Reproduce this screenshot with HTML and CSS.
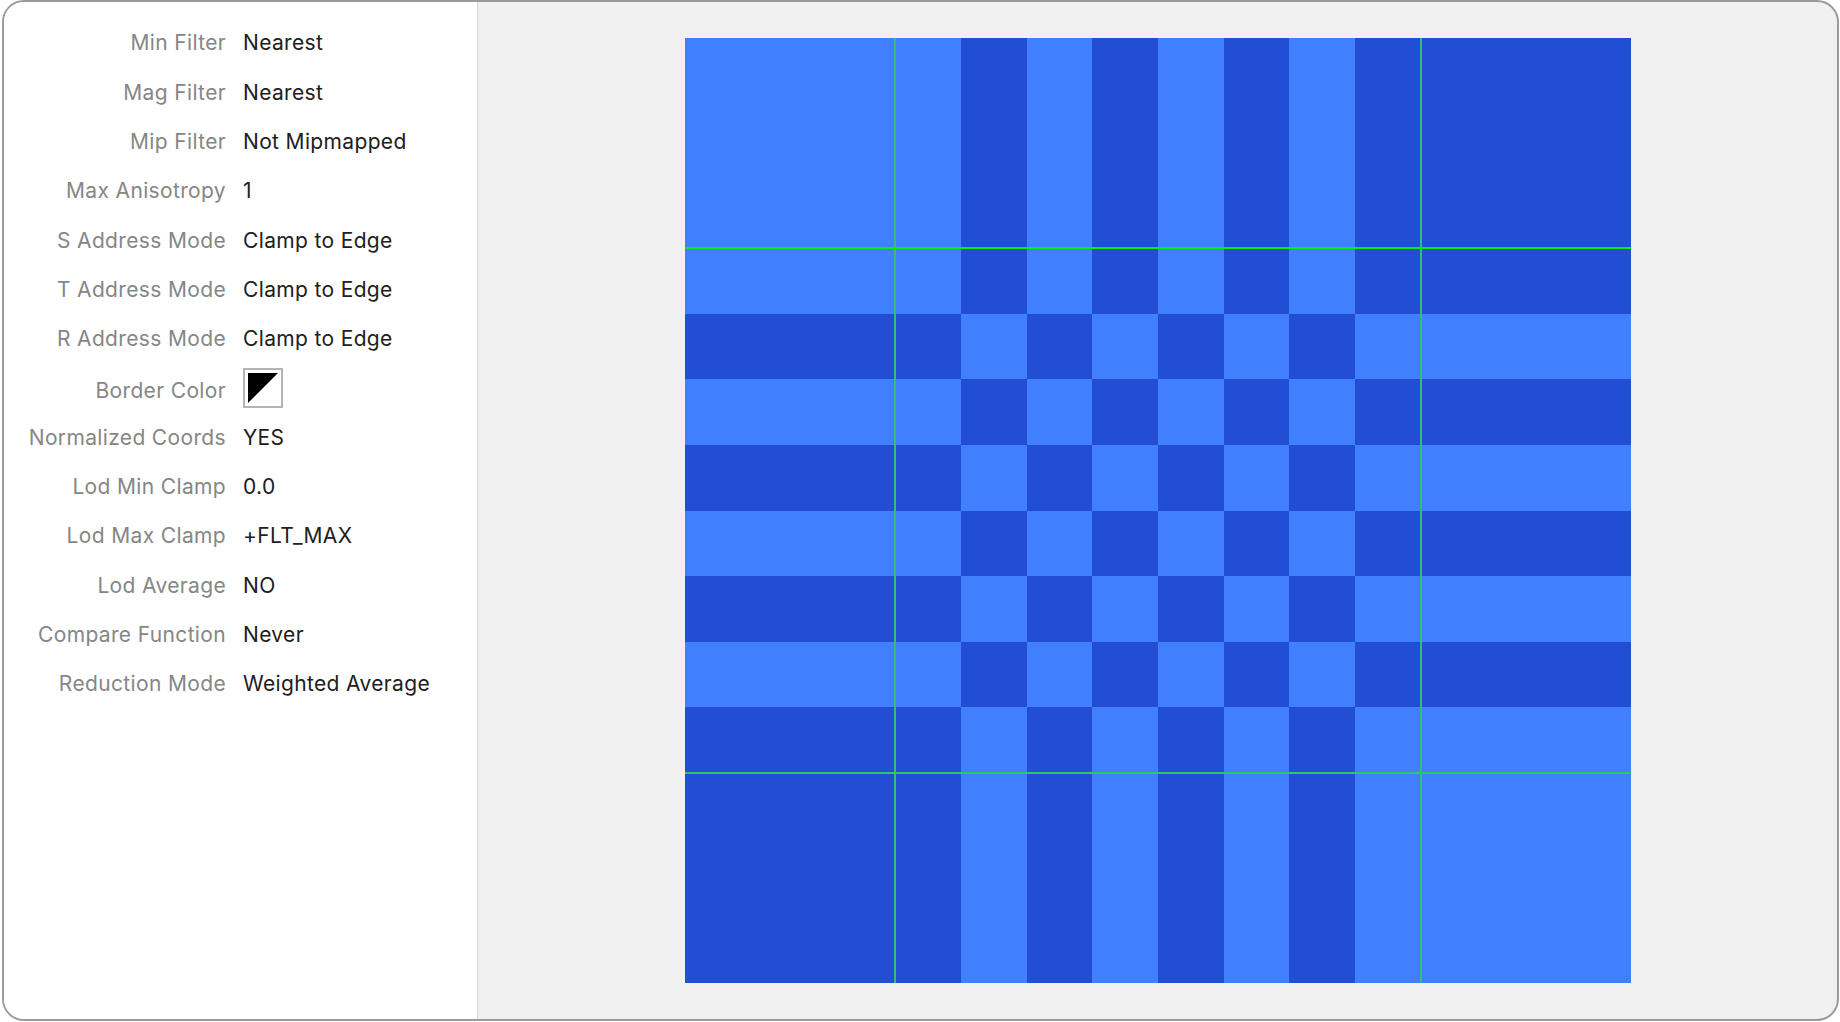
FILE: index.html
```html
<!DOCTYPE html>
<html>
<head>
<meta charset="utf-8">
<link rel="stylesheet" href="styles.css">
</head>
<body>
<div class="window">
  <div class="props">
    <div class="label">Min Filter</div><div class="value">Nearest</div>
    <div class="label">Mag Filter</div><div class="value">Nearest</div>
    <div class="label">Mip Filter</div><div class="value">Not Mipmapped</div>
    <div class="label">Max Anisotropy</div><div class="value">1</div>
    <div class="label">S Address Mode</div><div class="value">Clamp to Edge</div>
    <div class="label">T Address Mode</div><div class="value">Clamp to Edge</div>
    <div class="label">R Address Mode</div><div class="value">Clamp to Edge</div>
    <div class="label label-low">Border Color</div>
    <div class="value"><div class="swatch"><svg class="swatch-tri" viewBox="0 0 30 30"><polygon points="0,0 30,0 0,30" fill="#000"/></svg></div></div>
    <div class="label">Normalized Coords</div><div class="value">YES</div>
    <div class="label">Lod Min Clamp</div><div class="value">0.0</div>
    <div class="label">Lod Max Clamp</div><div class="value">+FLT_MAX</div>
    <div class="label">Lod Average</div><div class="value">NO</div>
    <div class="label">Compare Function</div><div class="value">Never</div>
    <div class="label">Reduction Mode</div><div class="value">Weighted Average</div>
  </div>
  <div class="preview">
    <svg class="texture" width="946" height="945" viewBox="-3.2 -3.2 14.4 14.4" preserveAspectRatio="none" shape-rendering="crispEdges">
      <rect x="-3.2" y="-3.2" width="14.4" height="14.4" fill="#4080ff"/>
      <g fill="#214ed5">
        <rect x="1" y="-3.2" width="1" height="4.2"/><rect x="3" y="-3.2" width="1" height="4.2"/><rect x="5" y="-3.2" width="1" height="4.2"/><rect x="7" y="-3.2" width="4.2" height="4.2"/>
        <rect x="-3.2" y="1" width="4.2" height="1"/><rect x="2" y="1" width="1" height="1"/><rect x="4" y="1" width="1" height="1"/><rect x="6" y="1" width="1" height="1"/>
        <rect x="1" y="2" width="1" height="1"/><rect x="3" y="2" width="1" height="1"/><rect x="5" y="2" width="1" height="1"/><rect x="7" y="2" width="4.2" height="1"/>
        <rect x="-3.2" y="3" width="4.2" height="1"/><rect x="2" y="3" width="1" height="1"/><rect x="4" y="3" width="1" height="1"/><rect x="6" y="3" width="1" height="1"/>
        <rect x="1" y="4" width="1" height="1"/><rect x="3" y="4" width="1" height="1"/><rect x="5" y="4" width="1" height="1"/><rect x="7" y="4" width="4.2" height="1"/>
        <rect x="-3.2" y="5" width="4.2" height="1"/><rect x="2" y="5" width="1" height="1"/><rect x="4" y="5" width="1" height="1"/><rect x="6" y="5" width="1" height="1"/>
        <rect x="1" y="6" width="1" height="1"/><rect x="3" y="6" width="1" height="1"/><rect x="5" y="6" width="1" height="1"/><rect x="7" y="6" width="4.2" height="1"/>
        <rect x="-3.2" y="7" width="4.2" height="4.2"/><rect x="2" y="7" width="1" height="4.2"/><rect x="4" y="7" width="1" height="4.2"/><rect x="6" y="7" width="1" height="4.2"/>
      </g>
      <line x1="0" y1="-3.2" x2="0" y2="11.2" stroke="#2cc270" stroke-width="2" vector-effect="non-scaling-stroke"/>
      <line x1="8" y1="-3.2" x2="8" y2="11.2" stroke="#2cc270" stroke-width="2" vector-effect="non-scaling-stroke"/>
      <line x1="-3.2" y1="0" x2="11.2" y2="0" stroke="#00ee10" stroke-width="2" vector-effect="non-scaling-stroke"/>
      <line x1="-3.2" y1="8" x2="11.2" y2="8" stroke="#26cc5c" stroke-width="2" vector-effect="non-scaling-stroke"/>
    </svg>
  </div>
</div>
</body>
</html>
```
FILE: styles.css
```css
html, body {
  margin: 0;
  padding: 0;
  background: #ffffff;
}

body {
  font-family: Inter, "Noto Sans", "Liberation Sans", sans-serif;
}

.window {
  box-sizing: border-box;
  margin-left: 2px;
  width: 1837px;
  height: 1021px;
  border: 2px solid #9a9a9a;
  border-radius: 22px;
  overflow: hidden;
  display: flex;
  background: #f0f0f0;
}

.props {
  box-sizing: border-box;
  width: 474px;
  flex: none;
  background: #ffffff;
  border-right: 1px solid #d6d6d6;
  padding-top: 16.7px;
  display: grid;
  grid-template-columns: 222px auto;
  grid-auto-rows: 49.3px;
  column-gap: 17px;
  align-content: start;
  align-items: center;
  font-size: 21px;
  line-height: 26px;
  letter-spacing: 0.35px;
}

.label {
  text-align: right;
  color: #868686;
  white-space: nowrap;
}

.label-low {
  margin-top: 5px;
}

.value {
  color: #202020;
  white-space: nowrap;
}

.swatch {
  box-sizing: border-box;
  width: 40px;
  height: 40px;
  border: 2px solid #b4b4b4;
  padding: 3px;
  background: #ffffff;
}

.swatch-tri {
  display: block;
  width: 30px;
  height: 30px;
}

.preview {
  flex: 1;
  display: flex;
  align-items: center;
  justify-content: center;
}

.texture {
  display: block;
  flex: none;
}
```
